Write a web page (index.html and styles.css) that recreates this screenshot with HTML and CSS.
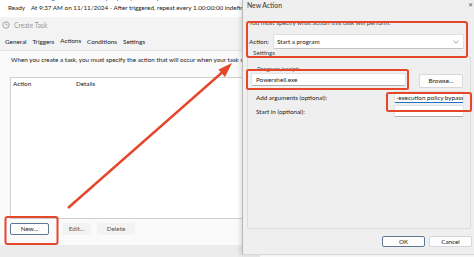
FILE: index.html
```html
<!DOCTYPE html>
<html lang="en">
<head>
  <meta charset="UTF-8" />
  <title>Create Task - New Action</title>
  <link rel="stylesheet" href="styles.css">
</head>
<body>

  <div class="desktop">

    <div class="status">
      <div class="status-cut">Running &nbsp; At 9:30 AM every day - repeat every 1 hour</div>
      <div class="status-row">
        <span>Ready</span>
        <span>At 9:37 AM on 11/11/2024 - After triggered, repeat every 1.00:00:00 indefinitely</span>
      </div>
    </div>

    <div class="window create-task">
      <div class="titlebar">
        <svg class="app-icon" width="8" height="8" viewBox="0 0 8 8">
          <circle cx="4" cy="4" r="3.2" fill="none" stroke="#9a9a9a" stroke-width="0.9"/>
          <path d="M4 2.2 V4 H5.5" fill="none" stroke="#9a9a9a" stroke-width="0.8"/>
        </svg>
        <span>Create Task</span>
      </div>
      <div class="tabs">
        <span class="tab">General</span>
        <span class="tab">Triggers</span>
        <span class="tab active">Actions</span>
        <span class="tab">Conditions</span>
        <span class="tab">Settings</span>
      </div>
      <div class="tab-panel">
        <p class="hint">When you create a task, you must specify the action that will occur when your task starts.</p>
        <div class="listbox">
          <div class="list-head">
            <span class="col-action">Action</span>
            <span>Details</span>
          </div>
        </div>
        <div class="btn-row">
          <button class="btn default">New...</button>
          <button class="btn flat">Edit...</button>
          <button class="btn flat">Delete</button>
        </div>
      </div>
      <div class="window-foot"></div>
    </div>

    <div class="window new-action">
      <div class="dlg-title">
        <span>New Action</span>
        <span class="close">✕</span>
      </div>
      <p class="dlg-hint">You must specify what action this task will perform.</p>
      <div class="action-row">
        <span class="lbl">Action:</span>
        <div class="select">
          <span>Start a program</span>
          <svg width="6" height="4" viewBox="0 0 6 4"><path d="M0.5 0.8 L3 3.2 L5.5 0.8" fill="none" stroke="#777" stroke-width="0.7"/></svg>
        </div>
      </div>
      <div class="group-label">Settings</div>
      <div class="group">
        <div class="field-label">Program/script:</div>
        <div class="program-row">
          <div class="input wide">Powershell.exe</div>
          <button class="btn browse">Browse...</button>
        </div>
        <div class="opt-row">
          <span>Add arguments (optional):</span>
          <div class="input small focused">-execution policy bypass</div>
        </div>
        <div class="opt-row">
          <span>Start in (optional):</span>
          <div class="input small"></div>
        </div>
      </div>
      <div class="dlg-buttons">
        <button class="btn default">OK</button>
        <button class="btn plain">Cancel</button>
      </div>
    </div>

    <svg class="marks" width="474" height="257" viewBox="0 0 474 257">
      <g fill="none" stroke="#e5472b" stroke-width="2">
        <rect x="247" y="22" width="220" height="35" rx="2"/>
        <rect x="247" y="70" width="161" height="19" rx="1.5"/>
        <rect x="387" y="93" width="84" height="18" rx="1.5"/>
        <rect x="5.5" y="217" width="52" height="27" rx="2"/>
        <line x1="68" y1="208" x2="226" y2="69" stroke-width="2.4"/>
      </g>
      <polygon points="232,63 218.5,69.5 225,77" fill="#e5472b"/>
    </svg>

  </div>

</body>
</html>
```

FILE: styles.css
```css
* {
  box-sizing: border-box;
}

body {
  margin: 0;
  font-family: Lato, 'Open Sans', sans-serif;
  font-size: 6.3px;
  color: #222;
  background: #fff;
}

.desktop {
  position: relative;
  width: 474px;
  height: 257px;
  overflow: hidden;
}

/* status strip of the task list behind the windows */
.status {
  width: 242px;
  height: 17px;
  background: #fff;
  padding-left: 8px;
  overflow: hidden;
}

.status-cut {
  margin-top: -6px;
  height: 9px;
  white-space: nowrap;
  color: #444;
  padding-left: 24px;
}

.status-row {
  display: flex;
  gap: 6px;
  white-space: nowrap;
  line-height: 9px;
  color: #222;
}

/* Create Task window */
.create-task {
  width: 260px;
  height: 240px;
  background: #f3f3f3;
  display: flex;
  flex-direction: column;
}

.titlebar {
  height: 15px;
  display: flex;
  align-items: center;
  gap: 4px;
  padding-left: 2px;
  color: #9a9a9a;
  font-size: 6.6px;
}

.tabs {
  height: 18px;
  display: flex;
  align-items: center;
  padding-left: 4px;
  gap: 4px;
  color: #222;
}

.tab {
  padding: 0 1px;
}

.tab.active {
  margin-top: -2px;
}

.tab-panel {
  height: 195px;
  background: #fafafa;
  border-top: 1px solid #e3e3e3;
  padding: 4px 0 0 10px;
  display: flex;
  flex-direction: column;
}

.hint {
  margin: 0 0 0 1px;
  line-height: 9px;
  white-space: nowrap;
}

.listbox {
  margin-top: 13px;
  height: 142px;
  background: #fff;
  border: 1px solid #cfcfcf;
  border-right: none;
}

.list-head {
  display: flex;
  padding: 2px 0 0 2px;
  line-height: 8px;
}

.col-action {
  width: 63px;
}

.btn-row {
  display: flex;
  gap: 13px;
  margin-top: 4px;
}

.btn {
  font-family: inherit;
  font-size: 6.3px;
  color: #222;
  height: 12px;
  padding: 0;
  border-radius: 2px;
  line-height: 10px;
}

.btn-row .btn {
  width: 39px;
}

.btn-row .flat {
  width: 29px;
  background: #f3f3f3;
  border: 1px solid #f3f3f3;
  color: #555;
}

.btn-row .flat + .flat {
  width: 38px;
  margin-left: -7px;
}

.btn.default {
  background: #fdfdfd;
  border: 1px solid #5c7894;
}

.window-foot {
  flex: 1;
  background: #ececec;
}

/* New Action dialog, over the first window */
.new-action {
  position: absolute;
  left: 242px;
  top: 0;
  width: 240px;
  height: 255px;
  background: #efefef;
  border-left: 1px solid #b8b8b8;
  border-bottom: 1px solid #d8d8d8;
  box-shadow: -2px 0 4px rgba(0, 0, 0, 0.12);
  padding: 0 0 0 4px;
}

.dlg-title {
  height: 9px;
  display: flex;
  align-items: center;
  justify-content: space-between;
  padding-right: 9px;
  font-size: 6.8px;
  color: #333;
}

.close {
  font-size: 6px;
  color: #555;
}

.dlg-hint {
  margin: 9px 0 0 2px;
  line-height: 9px;
  color: #444;
}

.action-row {
  display: flex;
  align-items: center;
  margin-top: 7px;
  gap: 1px;
}

.lbl {
  width: 25px;
  padding-left: 2px;
}

.select {
  width: 191px;
  height: 15px;
  background: #fff;
  border: 1px solid #e0e0e0;
  border-bottom-color: #c4c4c4;
  display: flex;
  align-items: center;
  justify-content: space-between;
  padding: 0 4px 0 3px;
  border-radius: 2px;
}

.group-label {
  margin: 0 0 0 6px;
  line-height: 8px;
  color: #444;
}

.group {
  margin-top: -1px;
  width: 224px;
  height: 173px;
  border: 1px solid #dcdcdc;
  border-radius: 2px;
  padding: 8px 0 0 3px;
}

.field-label {
  padding-left: 6px;
  line-height: 7px;
  color: #555;
}

.program-row {
  display: flex;
  align-items: flex-start;
  gap: 13px;
  margin-top: 1px;
}

.input {
  background: #fff;
  border: 1px solid #e2e2e2;
  border-bottom-color: #b0b0b0;
  border-radius: 2px;
  height: 13px;
  line-height: 11px;
  padding-left: 4px;
  white-space: nowrap;
  overflow: hidden;
}

.input.wide {
  width: 155px;
}

.btn.browse {
  margin-top: 1px;
  width: 44px;
  height: 14px;
  background: #fdfdfd;
  border: 1px solid #d8d8d8;
}

.opt-row {
  display: flex;
  justify-content: space-between;
  align-items: center;
  padding: 0 6px 0 5px;
  margin-top: 3px;
}

.opt-row + .opt-row {
  margin-top: 2px;
}

.input.small {
  width: 70px;
  height: 12px;
  padding-left: 1px;
}

.input.focused {
  border-bottom: 1px solid #1f6fc4;
}

.dlg-buttons {
  display: flex;
  justify-content: flex-end;
  gap: 4px;
  padding-right: 10px;
  margin-top: 7px;
}

.dlg-buttons .btn {
  width: 43px;
  height: 11px;
}

.btn.plain {
  background: #fdfdfd;
  border: 1px solid #d6d6d6;
}

/* annotation layer */
.marks {
  position: absolute;
  left: 0;
  top: 0;
  pointer-events: none;
}
```
